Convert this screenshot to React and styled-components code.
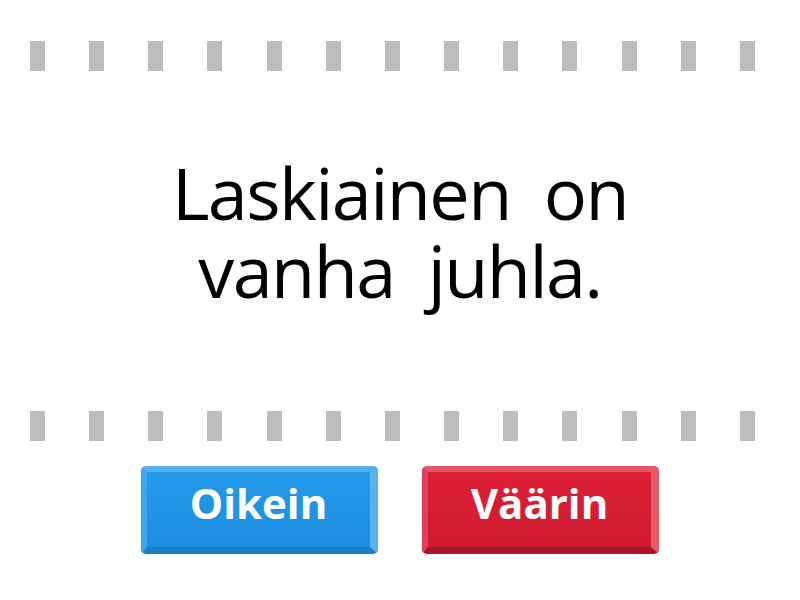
import React from "react";
import styled, { createGlobalStyle } from "styled-components";

const Global = createGlobalStyle`
  html, body { margin: 0; padding: 0; background: #fff; }
  body { font-family: "Open Sans", "Noto Sans", sans-serif; }
`;

const Page = styled.div`
  width: 800px;
  height: 600px;
  display: flex;
  flex-direction: column;
  padding-top: 41px;
  box-sizing: border-box;
`;

const DashRow = styled.div`
  display: flex;
  justify-content: space-between;
  padding: 0 45px 0 30px;
  height: 30px;
`;

const Dash = styled.span`
  width: 15px;
  height: 30px;
  background: #bdbdbd;
`;

const Statement = styled.div`
  height: 340px;
  display: flex;
  align-items: center;
  justify-content: center;
  padding-bottom: 20px;
  box-sizing: border-box;
  text-align: center;
  font-family: "Open Sans", "Noto Sans", sans-serif;
  font-size: 72px;
  line-height: 78px;
  color: #000;
  letter-spacing: -1.6px;
  word-spacing: 16px;
`;

const Buttons = styled.div`
  display: flex;
  justify-content: center;
  gap: 44px;
  margin-top: 25px;
`;

const palettes = {
  blue: { face: "#2399e9", faceBottom: "#1e8ee0", top: "#52b0f0", left: "#3ea4ec", right: "#58b3f1", bottom: "#1a7fc8" },
  red: { face: "#dc1f35", faceBottom: "#cf1b30", top: "#e65766", left: "#e0405a", right: "#e65a6a", bottom: "#a91427" },
};

const Answer = styled.button`
  width: 237px;
  height: 88px;
  box-sizing: border-box;
  border-radius: 5px;
  padding: 0 0 14px;
  cursor: pointer;
  font-family: "Open Sans", "Noto Sans", sans-serif;
  font-weight: 700;
  font-size: 42px;
  color: #fff;
  background: linear-gradient(
    to bottom,
    ${(p) => palettes[p.$tone].face},
    ${(p) => palettes[p.$tone].faceBottom}
  );
  border-style: solid;
  border-width: 6px 8px 7px 6px;
  border-top-color: ${(p) => palettes[p.$tone].top};
  border-left-color: ${(p) => palettes[p.$tone].left};
  border-right-color: ${(p) => palettes[p.$tone].right};
  border-bottom-color: ${(p) => palettes[p.$tone].bottom};
  display: flex;
  align-items: center;
  justify-content: center;
`;

export default function App() {
  const dashes = Array.from({ length: 13 });
  return (
    <>
      <Global />
      <Page>
        <DashRow>
          {dashes.map((_, i) => (
            <Dash key={i} />
          ))}
        </DashRow>
        <Statement>
          <div>
            Laskiainen on
            <br />
            vanha juhla.
          </div>
        </Statement>
        <DashRow>
          {dashes.map((_, i) => (
            <Dash key={i} />
          ))}
        </DashRow>
        <Buttons>
          <Answer $tone="blue">Oikein</Answer>
          <Answer $tone="red">Väärin</Answer>
        </Buttons>
      </Page>
    </>
  );
}
